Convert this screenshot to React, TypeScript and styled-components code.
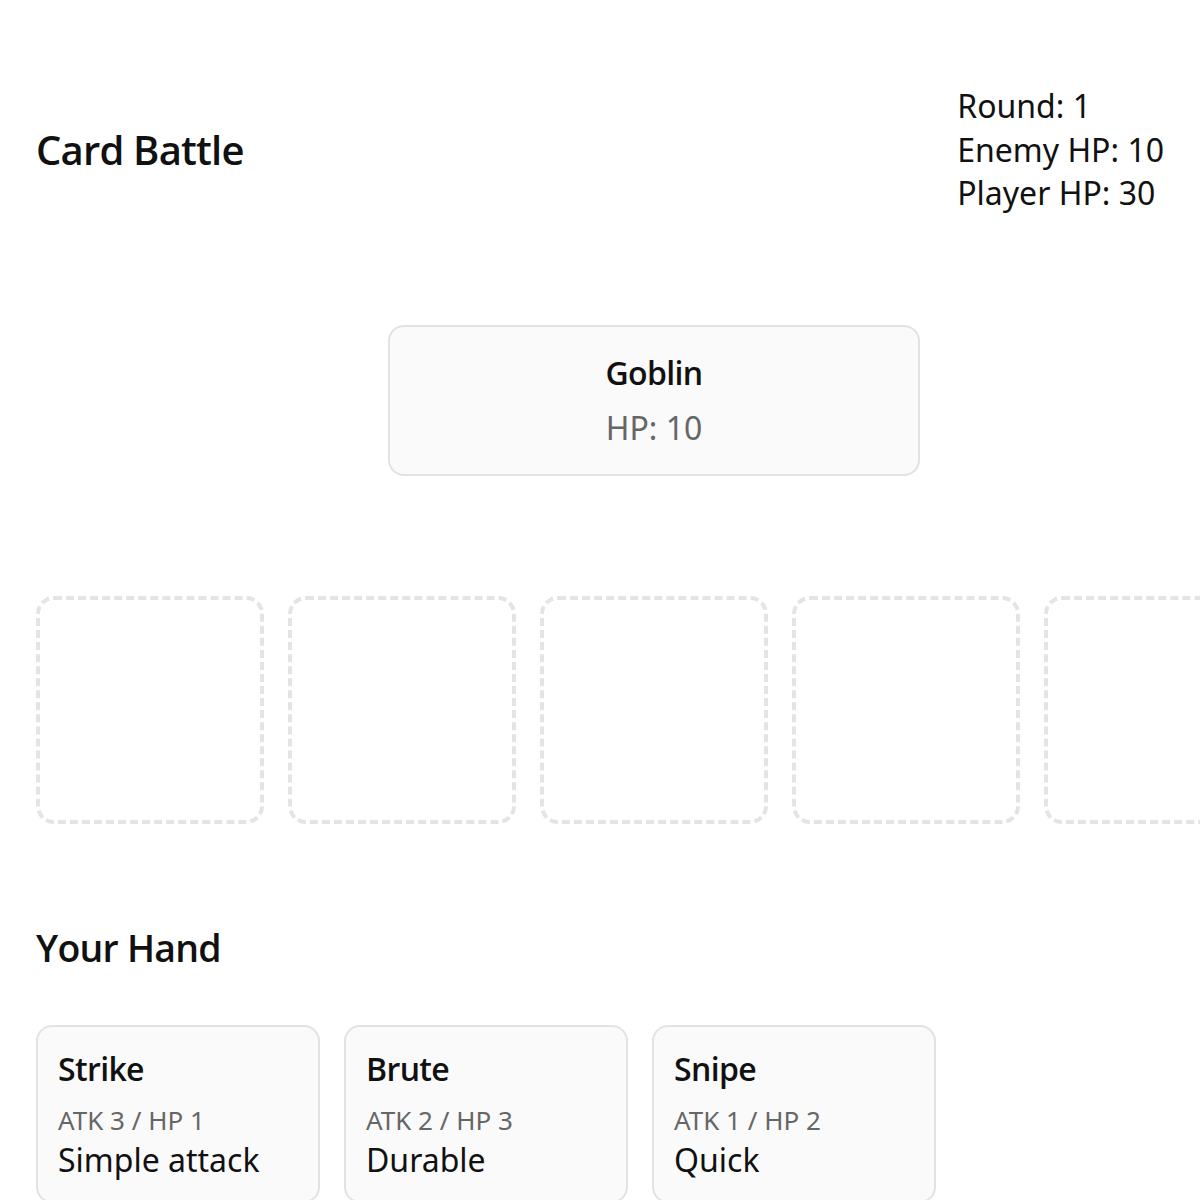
import React from "react";
import styled, {createGlobalStyle} from "styled-components";

const GlobalStyle = createGlobalStyle`
    html, body {
        margin: 0;
        padding: 0;
        background: #ffffff;
    }
    body {
        font-family: "Noto Sans", "Open Sans", sans-serif;
        color: #111111;
    }
`

const headingFont = `"Open Sans", "Noto Sans", sans-serif`

const Page = styled.div`
    padding: 0 36px 40px;
`

const Header = styled.header`
    display: flex;
    justify-content: space-between;
    align-items: center;
    padding-top: 84px;
`

const Title = styled.h1`
    margin: 0;
    font-family: ${headingFont};
    font-size: 40px;
    font-weight: 600;
    letter-spacing: -0.02em;
`

const Stats = styled.div`
    font-size: 32px;
    line-height: 43.6px;
`

// enemy card sits centred over the row of slots, which is wider than the window
const Board = styled.section`
    display: flex;
    flex-direction: column;
    align-items: center;
    width: max-content;
    margin-top: 110px;
`

const EnemyCard = styled.div`
    box-sizing: border-box;
    width: 532px;
    padding: 24px 24px 25px;
    background: #fafafa;
    border: 2px solid #e2e2e2;
    border-radius: 16px;
    text-align: center;
`

const EnemyName = styled.div`
    font-family: ${headingFont};
    font-size: 32px;
    font-weight: 600;
    letter-spacing: -0.02em;
    margin-bottom: 12px;
`

const EnemyHp = styled.div`
    font-size: 32px;
    color: #666666;
`

const SlotRow = styled.div`
    display: flex;
    gap: 24px;
    margin-top: 120px;
`

const Slot = styled.div`
    box-sizing: border-box;
    flex: 0 0 228px;
    height: 228px;
    border: 4px dashed #e4e4e4;
    border-radius: 18px;
`

const HandTitle = styled.h3`
    margin: 98px 0 0;
    font-family: ${headingFont};
    font-size: 37.44px;
    font-weight: 600;
    letter-spacing: -0.02em;
`

const Hand = styled.div`
    display: flex;
    gap: 24px;
    margin-top: 52px;
`

const HandCard = styled.div`
    box-sizing: border-box;
    width: 284px;
    padding: 20px;
    background: #fafafa;
    border: 2px solid #e2e2e2;
    border-radius: 16px;
`

const CardName = styled.div`
    font-family: ${headingFont};
    font-size: 32px;
    font-weight: 600;
    letter-spacing: -0.02em;
    margin-bottom: 12px;
`

const CardStats = styled.div`
    font-size: 26px;
    color: #666666;
`

const CardText = styled.div`
    font-size: 32px;
`

const hand = [
    {name: 'Strike', atk: 3, hp: 1, text: 'Simple attack'},
    {name: 'Brute', atk: 2, hp: 3, text: 'Durable'},
    {name: 'Snipe', atk: 1, hp: 2, text: 'Quick'},
]

export default function App() {
    const round = 1
    const enemyHp = 10
    const playerHp = 30

    return (
        <Page>
            <GlobalStyle/>
            <Header>
                <Title>Card Battle</Title>
                <Stats>
                    <div>Round: {round}</div>
                    <div>Enemy HP: {enemyHp}</div>
                    <div>Player HP: {playerHp}</div>
                </Stats>
            </Header>
            <Board>
                <EnemyCard>
                    <EnemyName>Goblin</EnemyName>
                    <EnemyHp>HP: {enemyHp}</EnemyHp>
                </EnemyCard>
                <SlotRow>
                    {[0, 1, 2, 3, 4].map(i => <Slot key={i}/>)}
                </SlotRow>
            </Board>
            <HandTitle>Your Hand</HandTitle>
            <Hand>
                {hand.map(c => (
                    <HandCard key={c.name}>
                        <CardName>{c.name}</CardName>
                        <CardStats>ATK {c.atk} / HP {c.hp}</CardStats>
                        <CardText>{c.text}</CardText>
                    </HandCard>
                ))}
            </Hand>
        </Page>
    )
}
